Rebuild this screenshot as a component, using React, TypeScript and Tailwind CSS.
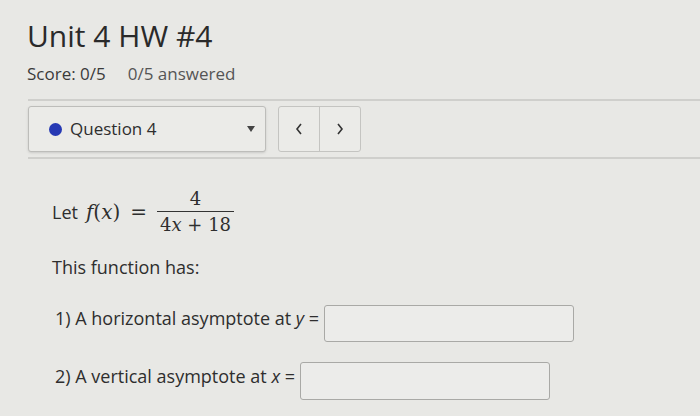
import React from 'react';

const sans = { fontFamily: '"Open Sans", "Noto Sans", sans-serif' };
const serif = { fontFamily: '"DejaVu Serif", "Liberation Serif", serif' };

const App: React.FC = () => {
  return (
    <div className="w-[700px] h-[416px] overflow-hidden bg-[#e8e8e5] text-[#2e2e2e]" style={sans}>
      <div className="pl-[27px] pt-[14px]">
        <h1 className="text-[30px] leading-[44px] font-normal text-[#2a2a2a]">Unit 4 HW #4</h1>
        <div className="flex gap-[22px] text-[17px] leading-[24px] mt-[4px] text-[#3a3a3a]">
          <span>Score: 0/5</span>
          <span className="text-[#555]">0/5 answered</span>
        </div>
      </div>

      <div className="ml-[28px] mt-[13px] border-t-2 border-b-2 border-[#cfcfcc] py-[5px] flex gap-[12px]">
        <div className="w-[238px] h-[46px] border border-[#bdbdba] rounded-[3px] bg-[#ebebe8] flex items-center pl-[20px] pr-[9px] shadow-sm">
          <span className="w-[13px] h-[13px] rounded-full bg-[#2639b4] mr-[8px]" />
          <span className="text-[17px]">Question 4</span>
          <svg className="ml-auto" width="10" height="8" viewBox="0 0 10 8">
            <path d="M1 1 L9 1 L5 7 Z" fill="#444" />
          </svg>
        </div>
        <div className="flex h-[46px] border border-[#c4c4c1] rounded-[3px] bg-[#ebebe8]">
          <div className="w-[41px] flex items-center justify-center border-r border-[#c4c4c1]">
            <svg width="10" height="14" viewBox="0 0 10 14">
              <path d="M7 2 L3 7 L7 12" fill="none" stroke="#333" strokeWidth="1.6" />
            </svg>
          </div>
          <div className="w-[40px] flex items-center justify-center">
            <svg width="10" height="14" viewBox="0 0 10 14">
              <path d="M3 2 L7 7 L3 12" fill="none" stroke="#333" strokeWidth="1.6" />
            </svg>
          </div>
        </div>
      </div>

      <div className="pl-[52px] pt-[29px]">
        <div className="flex items-center text-[18px]">
          <span>Let</span>
          <span className="ml-[8px] text-[20px] italic" style={serif}>f</span>
          <span className="text-[20px]" style={serif}>(</span>
          <span className="text-[20px] italic" style={serif}>x</span>
          <span className="text-[20px]" style={serif}>)</span>
          <span className="mx-[10px] text-[20px]" style={serif}>=</span>
          <div className="flex flex-col items-center text-[18px] leading-[22px]" style={serif}>
            <span className="pb-[1px]">4</span>
            <span className="border-t border-[#333] px-[3px] pt-[2px]">
              4<i>x</i> + 18
            </span>
          </div>
        </div>

        <p className="mt-[19px] text-[18px] leading-[24px]">This function has:</p>

        <div className="mt-[26px] pl-[3px] flex items-start text-[18px] leading-[24px]">
          <span className="mt-[1px]">1) A horizontal asymptote at <i>y</i> =</span>
          <div className="ml-[5px] w-[250px] h-[37px] border border-[#a9a9a6] rounded-[3px] bg-[#ececea]" />
        </div>

        <div className="mt-[20px] pl-[3px] flex items-start text-[18px] leading-[24px]">
          <span className="mt-[2px]">2) A vertical asymptote at <i>x</i> =</span>
          <div className="ml-[5px] w-[250px] h-[38px] border border-[#a9a9a6] rounded-[3px] bg-[#ececea]" />
        </div>
      </div>
    </div>
  );
};

export default App;
